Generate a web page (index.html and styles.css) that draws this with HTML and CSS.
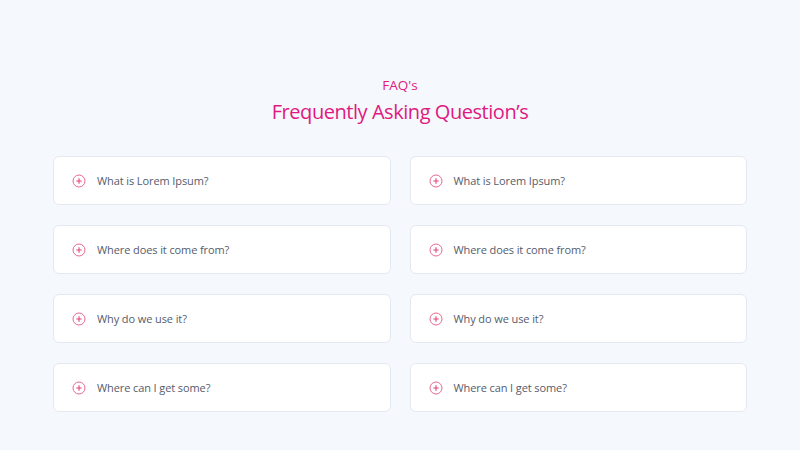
FILE: index.html
```html
<!DOCTYPE html>
<html>
<head>
<meta charset="utf-8">
<link rel="stylesheet" href="styles.css">
</head>
<body>
<section class="faq">
  <div class="head">
    <p class="kicker">FAQ's</p>
    <h1 class="title">Frequently Asking Question’s</h1>
  </div>
  <div class="grid">
    <div class="item"><span class="icon"><svg viewBox="0 0 14 14" width="14" height="14"><circle cx="7" cy="7" r="6" fill="none" stroke="#e86a8c" stroke-width="1"/><path d="M7 4.3v5.4M4.3 7h5.4" stroke="#e0457a" stroke-width="1.1"/></svg></span><span class="q">What is Lorem Ipsum?</span></div>
    <div class="item"><span class="icon"><svg viewBox="0 0 14 14" width="14" height="14"><circle cx="7" cy="7" r="6" fill="none" stroke="#e86a8c" stroke-width="1"/><path d="M7 4.3v5.4M4.3 7h5.4" stroke="#e0457a" stroke-width="1.1"/></svg></span><span class="q">What is Lorem Ipsum?</span></div>
    <div class="item"><span class="icon"><svg viewBox="0 0 14 14" width="14" height="14"><circle cx="7" cy="7" r="6" fill="none" stroke="#e86a8c" stroke-width="1"/><path d="M7 4.3v5.4M4.3 7h5.4" stroke="#e0457a" stroke-width="1.1"/></svg></span><span class="q">Where does it come from?</span></div>
    <div class="item"><span class="icon"><svg viewBox="0 0 14 14" width="14" height="14"><circle cx="7" cy="7" r="6" fill="none" stroke="#e86a8c" stroke-width="1"/><path d="M7 4.3v5.4M4.3 7h5.4" stroke="#e0457a" stroke-width="1.1"/></svg></span><span class="q">Where does it come from?</span></div>
    <div class="item"><span class="icon"><svg viewBox="0 0 14 14" width="14" height="14"><circle cx="7" cy="7" r="6" fill="none" stroke="#e86a8c" stroke-width="1"/><path d="M7 4.3v5.4M4.3 7h5.4" stroke="#e0457a" stroke-width="1.1"/></svg></span><span class="q">Why do we use it?</span></div>
    <div class="item"><span class="icon"><svg viewBox="0 0 14 14" width="14" height="14"><circle cx="7" cy="7" r="6" fill="none" stroke="#e86a8c" stroke-width="1"/><path d="M7 4.3v5.4M4.3 7h5.4" stroke="#e0457a" stroke-width="1.1"/></svg></span><span class="q">Why do we use it?</span></div>
    <div class="item"><span class="icon"><svg viewBox="0 0 14 14" width="14" height="14"><circle cx="7" cy="7" r="6" fill="none" stroke="#e86a8c" stroke-width="1"/><path d="M7 4.3v5.4M4.3 7h5.4" stroke="#e0457a" stroke-width="1.1"/></svg></span><span class="q">Where can I get some?</span></div>
    <div class="item"><span class="icon"><svg viewBox="0 0 14 14" width="14" height="14"><circle cx="7" cy="7" r="6" fill="none" stroke="#e86a8c" stroke-width="1"/><path d="M7 4.3v5.4M4.3 7h5.4" stroke="#e0457a" stroke-width="1.1"/></svg></span><span class="q">Where can I get some?</span></div>
  </div>
</section>
</body>
</html>
```
FILE: styles.css
```css
html, body {
  margin: 0;
  padding: 0;
  background: #f5f8fd;
  font-family: "Open Sans", "Noto Sans", sans-serif;
}
.faq {
  width: 694px;
  margin: 0 auto;
  padding-top: 75px;
}
.head {
  text-align: center;
}
.kicker {
  margin: 0;
  font-size: 13.5px;
  line-height: 20px;
  color: #e0197f;
}
.title {
  margin: 2px 0 0;
  font-size: 20px;
  font-weight: 400;
  line-height: 30px;
  color: #e0197f;
  letter-spacing: -0.45px;
}
.grid {
  margin-top: 29px;
  display: grid;
  grid-template-columns: 1fr 1fr;
  column-gap: 19px;
  row-gap: 20px;
}
.item {
  height: 49px;
  box-sizing: border-box;
  background: #ffffff;
  border: 1px solid #e4e9f1;
  border-radius: 6px;
  display: flex;
  align-items: center;
  padding-left: 18px;
}
.icon {
  display: flex;
  width: 14px;
  height: 14px;
  margin-right: 11px;
}
.q {
  font-size: 11px;
  letter-spacing: -0.1px;
  color: #555b6c;
}
```
